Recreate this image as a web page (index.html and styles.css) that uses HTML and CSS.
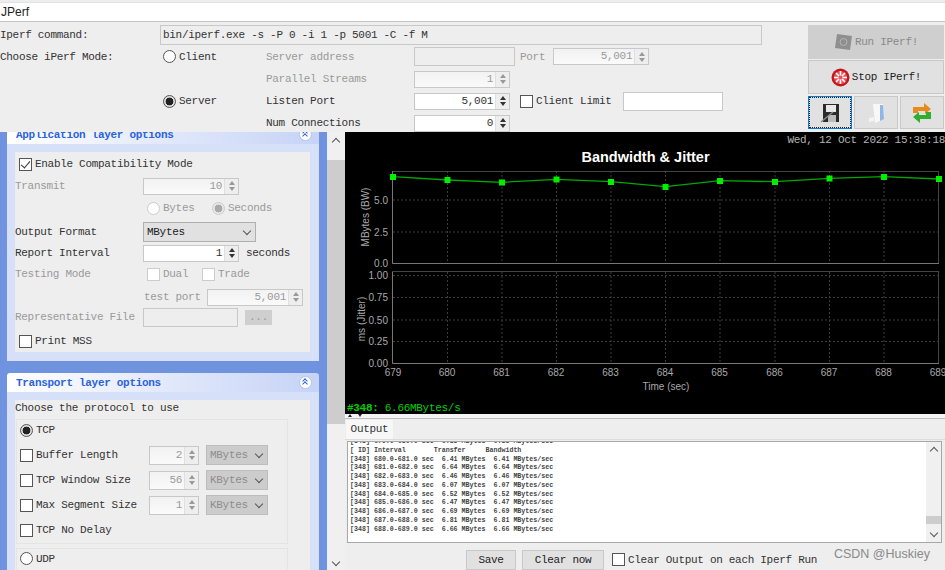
FILE: index.html
```html
<!DOCTYPE html>
<html>

<head>
    <title>JPerf</title>
    <meta charset="utf-8">
    <link rel="stylesheet" href="styles.css">
</head>

<body>
    <div class="app">
        <div class="titlebar">JPerf</div>

        <div class="top">
            <div class="top-form">
                <div class="lbl">Iperf command:</div>
                <div class="command">bin/iperf.exe -s -P 0 -i 1 -p 5001 -C -f M</div>

                <div class="lbl">Choose iPerf Mode:</div>
                <div class="opt"><span class="radio"></span>Client</div>
                <div class="lbl off">Server address</div>
                <div class="field off w-addr"></div>
                <div class="port-cell">
                    <span class="lbl off">Port</span>
                    <div class="spin off w-port"><span class="val">5,001</span><span class="arrows"><i></i><i></i></span></div>
                </div>

                <div></div>
                <div></div>
                <div class="lbl off">Parallel Streams</div>
                <div class="spin off w-top"><span class="val">1</span><span class="arrows"><i></i><i></i></span></div>
                <div></div>

                <div></div>
                <div class="opt"><span class="radio on"></span>Server</div>
                <div class="lbl">Listen Port</div>
                <div class="spin w-top"><span class="val">5,001</span><span class="arrows"><i></i><i></i></span></div>
                <div class="limit-cell">
                    <div class="opt"><span class="check"></span>Client Limit</div>
                    <div class="field w-limit"></div>
                </div>

                <div></div>
                <div></div>
                <div class="lbl">Num Connections</div>
                <div class="spin w-top"><span class="val">0</span><span class="arrows"><i></i><i></i></span></div>
                <div></div>
            </div>

            <div class="actions">
                <div class="btn big disabled">
                    <svg width="19" height="18" viewBox="0 0 19 18"><path d="M3 1 L18 3 L16 17 L1 15 Z" fill="#8f8f8f"/><circle cx="9.5" cy="9" r="3.5" fill="none" stroke="#b5b5b5"/></svg>
                    Run IPerf!
                </div>
                <div class="btn big">
                    <svg width="19" height="19" viewBox="0 0 19 19"><circle cx="9.5" cy="9.5" r="9" fill="#c4161c"/><circle cx="9.5" cy="9.5" r="6.6" fill="#e8525a"/><path d="M9.5 3 V7.5 M9.5 11.5 V16 M3 9.5 H7.5 M11.5 9.5 H16 M5 5 L8 8 M11 11 L14 14 M14 5 L11 8 M8 11 L5 14" stroke="#fff" stroke-width="1.6"/></svg>
                    Stop IPerf!
                </div>
                <div class="tool-row">
                    <div class="btn tool focus">
                        <svg width="20" height="20" viewBox="0 0 20 20"><path d="M3 1 H19 V19 H3 Z" fill="#2b2b2b"/><rect x="6" y="2" width="10" height="7" fill="#e8e8e8"/><rect x="8" y="12" width="8" height="7" fill="#bbb"/><path d="M1 19 L13 9" stroke="#8a8a8a" stroke-width="1.5"/></svg>
                    </div>
                    <div class="btn tool">
                        <svg width="20" height="22" viewBox="0 0 20 22"><path d="M3 16 L8 15 V19 L3 20 Z" fill="#f4f4f4"/><path d="M7 2 H17 L18 17 L9 21 Z" fill="#f8f8f8"/><path d="M14 3 H17 L18 17 L14 19 Z" fill="#8fb6e6"/></svg>
                    </div>
                    <div class="btn tool">
                        <svg width="20" height="20" viewBox="0 0 20 20"><path d="M1 10 V4 H12 V0 L19 6 L13 11 V8 H6 V10 Z" fill="#e98a1c"/><path d="M19 9 V16 H8 V20 L1 14 L7 9 V12 H14 V9 Z" fill="#2fae2f"/></svg>
                    </div>
                </div>
            </div>
        </div>

        <div class="main">
            <div class="side">
                <div class="panes">
                    <div class="pane first">
                        <div class="pane-head">Application layer options<span class="collapse"></span></div>
                        <div class="pane-body">
                            <div class="pane-inner app-rows">
                                <div class="row"><div class="opt wide"><span class="check ticked"></span>Enable Compatibility Mode</div></div>
                                <div class="row">
                                    <span class="lbl off">Transmit</span>
                                    <div class="spin off w-side"><span class="val">10</span><span class="arrows"><i></i><i></i></span></div>
                                </div>
                                <div class="row">
                                    <span></span>
                                    <div class="ctrls">
                                        <div class="opt off opt-bytes"><span class="radio"></span>Bytes</div>
                                        <div class="opt off"><span class="radio on"></span>Seconds</div>
                                    </div>
                                </div>
                                <div class="row">
                                    <span class="lbl">Output Format</span>
                                    <div class="select w-format">MBytes<span class="chev"></span></div>
                                </div>
                                <div class="row">
                                    <span class="lbl">Report Interval</span>
                                    <div class="ctrls">
                                        <div class="spin w-side"><span class="val">1</span><span class="arrows"><i></i><i></i></span></div>
                                        <span class="lbl unit">seconds</span>
                                    </div>
                                </div>
                                <div class="row">
                                    <span class="lbl off">Testing Mode</span>
                                    <div class="ctrls">
                                        <div class="opt off opt-dual"><span class="check"></span>Dual</div>
                                        <div class="opt off"><span class="check"></span>Trade</div>
                                    </div>
                                </div>
                                <div class="row">
                                    <span></span>
                                    <div class="ctrls">
                                        <span class="lbl off test-port">test port</span>
                                        <div class="spin off w-side"><span class="val">5,001</span><span class="arrows"><i></i><i></i></span></div>
                                    </div>
                                </div>
                                <div class="row">
                                    <span class="lbl off">Representative File</span>
                                    <div class="ctrls">
                                        <div class="field off w-file"></div>
                                        <div class="dots">...</div>
                                    </div>
                                </div>
                                <div class="row"><div class="opt wide"><span class="check"></span>Print MSS</div></div>
                            </div>
                        </div>
                    </div>

                    <div class="pane">
                        <div class="pane-head">Transport layer options<span class="collapse"></span></div>
                        <div class="pane-body">
                            <div class="pane-inner">
                                <div class="proto-title lbl">Choose the protocol to use</div>
                                <div class="group">
                                    <div class="proto-row"><div class="opt"><span class="radio on"></span>TCP</div></div>
                                    <div class="proto-row">
                                        <div class="opt name"><span class="check"></span>Buffer Length</div>
                                        <div class="spin off w-proto"><span class="val">2</span><span class="arrows"><i></i><i></i></span></div>
                                        <div class="select off w-unit">MBytes<span class="chev"></span></div>
                                    </div>
                                    <div class="proto-row">
                                        <div class="opt name"><span class="check"></span>TCP Window Size</div>
                                        <div class="spin off w-proto"><span class="val">56</span><span class="arrows"><i></i><i></i></span></div>
                                        <div class="select off w-unit">KBytes<span class="chev"></span></div>
                                    </div>
                                    <div class="proto-row">
                                        <div class="opt name"><span class="check"></span>Max Segment Size</div>
                                        <div class="spin off w-proto"><span class="val">1</span><span class="arrows"><i></i><i></i></span></div>
                                        <div class="select off w-unit">KBytes<span class="chev"></span></div>
                                    </div>
                                    <div class="proto-row"><div class="opt"><span class="check"></span>TCP No Delay</div></div>
                                </div>
                                <div class="group">
                                    <div class="proto-row"><div class="opt"><span class="radio"></span>UDP</div></div>
                                </div>
                            </div>
                        </div>
                    </div>
                </div>
                <div class="side-scroll">
                    <span class="chev up"></span>
                    <div class="thumb"></div>
                    <span class="chev"></span>
                </div>
            </div>

            <div class="right">
                <div class="chart">
                    <svg class="plot" width="600" height="282" viewBox="345 132 600 282">
                        <g stroke="#3c3c3c" stroke-dasharray="2 2">
                            <path d="M393 200 H939 M393 232 H939 M393 275.5 H939 M393 297.5 H939 M393 320 H939 M393 341.5 H939" />
                            <path d="M447.5 171 V263 M502 171 V263 M556.5 171 V263 M611 171 V263 M665.5 171 V263 M720 171 V263 M775 171 V263 M829.5 171 V263 M884 171 V263" />
                            <path d="M447.5 272 V363 M502 272 V363 M556.5 272 V363 M611 272 V363 M665.5 272 V363 M720 272 V363 M775 272 V363 M829.5 272 V363 M884 272 V363" />
                        </g>
                        <rect x="392.5" y="171.5" width="546" height="92" fill="none" stroke="#444"/>
                        <rect x="392.5" y="271.5" width="546" height="92" fill="none" stroke="#444"/>
                        <path d="M392.5 171 V263.5 H939 M392.5 272 V363.5 H939" fill="none" stroke="#777"/>

                        <polyline fill="none" stroke="#00a800" stroke-width="1.3" points="393,176.7 447.5,180 502,182.3 556.5,179.3 611,181.7 665.5,186.7 720,180.7 775,181.7 829.5,178.3 884,176.7 938.5,179"/>
                        <g fill="#00f000">
                            <rect x="390" y="174" width="6" height="6"/>
                            <rect x="444.5" y="177" width="6" height="6"/>
                            <rect x="499" y="179.5" width="6" height="6"/>
                            <rect x="553.5" y="176.5" width="6" height="6"/>
                            <rect x="608" y="179" width="6" height="6"/>
                            <rect x="662.5" y="184" width="6" height="6"/>
                            <rect x="717" y="178" width="6" height="6"/>
                            <rect x="772" y="179" width="6" height="6"/>
                            <rect x="826.5" y="175.5" width="6" height="6"/>
                            <rect x="881" y="174" width="6" height="6"/>
                            <rect x="936" y="176" width="6" height="6"/>
                        </g>

                        <text class="chart-title" x="645.5" y="162" text-anchor="middle">Bandwidth &amp; Jitter</text>
                        <g class="tick" text-anchor="end">
                            <text x="388" y="204">5.0</text>
                            <text x="388" y="236">2.5</text>
                            <text x="388" y="267">0.0</text>
                            <text x="388" y="279">1.00</text>
                            <text x="388" y="301">0.75</text>
                            <text x="388" y="324">0.50</text>
                            <text x="388" y="345">0.25</text>
                            <text x="388" y="367">0.00</text>
                        </g>
                        <g class="tick" text-anchor="middle">
                            <text x="393" y="376">679</text>
                            <text x="447" y="376">680</text>
                            <text x="501.5" y="376">681</text>
                            <text x="556" y="376">682</text>
                            <text x="610.5" y="376">683</text>
                            <text x="665" y="376">684</text>
                            <text x="719.5" y="376">685</text>
                            <text x="774.5" y="376">686</text>
                            <text x="829" y="376">687</text>
                            <text x="883.5" y="376">688</text>
                            <text x="938" y="376">689</text>
                            <text x="666" y="390">Time (sec)</text>
                            <text x="0" y="0" transform="translate(369 217) rotate(-90)">MBytes (BW)</text>
                            <text x="0" y="0" transform="translate(365 319) rotate(-90)">ms (Jitter)</text>
                        </g>
                    </svg>
                    <div class="stamp">Wed, 12 Oct 2022 15:38:18</div>
                    <div class="rate"><b>#348:</b> 6.66MBytes/s</div>
                </div>

                <div class="splitter"><i class="up"></i><i></i></div>

                <div class="output">
                    <div class="tabs"><div class="tab">Output</div></div>
                    <div class="log-wrap">
                        <div class="log">
<pre>[348] 679.0-680.0 sec  6.85 MBytes  6.85 MBytes/sec
[ ID] Interval       Transfer     Bandwidth
[348] 680.0-681.0 sec  6.41 MBytes  6.41 MBytes/sec
[348] 681.0-682.0 sec  6.64 MBytes  6.64 MBytes/sec
[348] 682.0-683.0 sec  6.46 MBytes  6.46 MBytes/sec
[348] 683.0-684.0 sec  6.07 MBytes  6.07 MBytes/sec
[348] 684.0-685.0 sec  6.52 MBytes  6.52 MBytes/sec
[348] 685.0-686.0 sec  6.47 MBytes  6.47 MBytes/sec
[348] 686.0-687.0 sec  6.69 MBytes  6.69 MBytes/sec
[348] 687.0-688.0 sec  6.81 MBytes  6.81 MBytes/sec
[348] 688.0-689.0 sec  6.66 MBytes  6.66 MBytes/sec</pre>
                        </div>
                        <div class="log-scroll">
                            <span class="chev up"></span>
                            <div class="log-thumb"></div>
                            <span class="chev"></span>
                        </div>
                    </div>
                    <div class="output-foot">
                        <div class="btn foot-save">Save</div>
                        <div class="btn foot-clear">Clear now</div>
                        <div class="opt"><span class="check"></span>Clear Output on each Iperf Run</div>
                        <div class="mark">CSDN @Huskiey</div>
                    </div>
                </div>
            </div>
        </div>
    </div>
</body>

</html>
```

FILE: styles.css
```css
html, body {
    margin: 0;
    padding: 0;
}

body {
    width: 945px;
    height: 570px;
    overflow: hidden;
    background: #eeeeee;
    font-family: "Liberation Mono", "Noto Sans CJK SC", monospace;
    font-size: 11px;
    letter-spacing: -0.3px;
    color: #333;
}

.app {
    display: flex;
    flex-direction: column;
    height: 570px;
}

.titlebar {
    height: 18px;
    margin-top: 2px;
    border-top: 1px solid #e2e2e2;
    border-bottom: 1px solid #c4c4c4;
    background: white;
    padding-left: 1px;
    font-family: "Liberation Sans", sans-serif;
    font-size: 12px;
    letter-spacing: 0;
    line-height: 18px;
    color: #222;
}

/* top form */
.top {
    display: flex;
    height: 110px;
    flex-shrink: 0;
}

.top-form {
    width: 808px;
    display: grid;
    grid-template-columns: 160px 106px 148px 106px 242px;
    grid-template-rows: 21px 23px 22px 22px 22px;
    align-items: center;
    padding-top: 2px;
}

.lbl {
    white-space: pre;
}

.off {
    color: #9a9a9a;
}

.command {
    grid-column: 2 / 6;
    height: 18px;
    line-height: 18px;
    padding-left: 2px;
    border: 1px solid #c8c8c8;
    color: #333;
}

.opt {
    display: flex;
    align-items: center;
    gap: 3px;
    white-space: pre;
}

.opt.off {
    color: #9a9a9a;
}

.opt .radio, .opt .check {
    margin-left: 3px;
}

.radio {
    display: inline-block;
    box-sizing: border-box;
    width: 13px;
    height: 13px;
    border: 1px solid #555;
    border-radius: 50%;
    background: white;
}

.radio.on {
    background: radial-gradient(circle, #222 0 3.6px, #ddd 4.2px);
}

.off .radio {
    border-color: #ccc;
}

.off .radio.on {
    background: radial-gradient(circle, #aaa 0 3.6px, #e8e8e8 4.2px);
}

.check {
    display: inline-block;
    box-sizing: border-box;
    width: 13px;
    height: 13px;
    border: 1px solid #555;
    background: white;
    position: relative;
}

.off .check {
    border-color: #ccc;
}

.check.ticked::after {
    content: "";
    position: absolute;
    left: 3px;
    top: 0;
    width: 4px;
    height: 8px;
    border-right: 1px solid #333;
    border-bottom: 1px solid #333;
    transform: rotate(40deg);
}

.field {
    box-sizing: border-box;
    height: 19px;
    border: 1px solid #c8c8c8;
    background: white;
}

.field.off {
    background: #eeeeee;
}

.w-addr { width: 101px; }
.w-limit { width: 100px; }
.w-file { width: 95px; }

.spin {
    box-sizing: border-box;
    display: flex;
    height: 17px;
    border: 1px solid #c8c8c8;
    background: white;
    color: #333;
}

.spin .val {
    flex: 1;
    text-align: right;
    line-height: 15px;
    padding-right: 2px;
}

.spin .arrows {
    width: 13px;
    display: flex;
    flex-direction: column;
    justify-content: center;
    align-items: center;
    gap: 2px;
    background: #eeeeee;
    border-left: 1px solid #e0e0e0;
}

.spin .arrows i {
    width: 0;
    height: 0;
    border-left: 3.5px solid transparent;
    border-right: 3.5px solid transparent;
    border-bottom: 4px solid #333;
}

.spin .arrows i + i {
    border-bottom: 0;
    border-top: 4px solid #333;
}

.spin.off {
    background: linear-gradient(#f2f2f2, #fafafa);
    color: #9a9a9a;
}

.spin.off .arrows i {
    border-bottom-color: #999;
}

.spin.off .arrows i + i {
    border-top-color: #999;
}

.w-top { width: 96px; }
.w-port { width: 96px; }
.w-side { width: 96px; }
.w-proto { width: 50px; height: 19px; }
.w-proto .val { line-height: 17px; }

.port-cell {
    display: flex;
    align-items: center;
    gap: 8px;
}

.limit-cell {
    display: flex;
    align-items: center;
    gap: 11px;
}

.limit-cell .opt .check {
    margin-left: 0;
}

/* run / stop buttons */
.actions {
    width: 136px;
    padding-top: 3px;
    display: flex;
    flex-direction: column;
    gap: 1px;
}

.btn {
    box-sizing: border-box;
    display: flex;
    align-items: center;
    justify-content: center;
    gap: 2px;
    background: #e1e1e1;
    border: 1px solid #c8c8c8;
    color: #222;
}

.big {
    height: 34px;
}

.disabled {
    background: #cfcfcf;
    border-color: #cfcfcf;
    color: #8a8a8a;
}

.tool-row {
    display: flex;
    gap: 2px;
    margin-top: 1px;
}

.tool {
    width: 44px;
    height: 33px;
}

.focus {
    border: 1px solid #0a78d7;
    outline: 1px dotted #222;
    outline-offset: -2px;
}

/* left side */
.main {
    display: flex;
    flex: 1;
    min-height: 0;
    position: relative;
}

.side {
    width: 345px;
    flex-shrink: 0;
    display: flex;
    overflow: hidden;
    background: #6f93df;
}

.panes {
    width: 312px;
    margin: -7px 8px 0 7px;
    flex-shrink: 0;
    display: flex;
    flex-direction: column;
    gap: 12px;
}

.pane-head {
    height: 19px;
    display: flex;
    align-items: center;
    justify-content: space-between;
    padding: 0 7px 0 9px;
    background: linear-gradient(90deg, #ffffff, #c6d3f7);
    color: #2c62da;
    font-weight: bold;
    border-radius: 3px 3px 0 0;
}

.collapse {
    box-sizing: border-box;
    width: 13px;
    height: 13px;
    border-radius: 50%;
    background: white;
    border: 1px solid #b5c4ea;
    position: relative;
}

.collapse::before, .collapse::after {
    content: "";
    position: absolute;
    left: 3px;
    width: 3px;
    height: 3px;
    border-left: 1px solid #2c62da;
    border-top: 1px solid #2c62da;
    transform: rotate(45deg);
}

.collapse::before { top: 2px; }
.collapse::after { top: 5px; }

.pane-body {
    background: #d6e0f8;
    padding: 8px 9px 9px 8px;
}

.pane-inner {
    background: #eeeeee;
}

.first {
    flex-shrink: 0;
}

.app-rows {
    display: grid;
    grid-template-rows: 22px 22px 24px 21px 21px 23px 20px 24px 21px;
    padding-top: 2px;
}

.row {
    display: grid;
    grid-template-columns: 128px 1fr;
    height: 20px;
    align-items: center;
}

.wide {
    grid-column: 1 / 3;
}

.opt.wide .check {
    margin-left: 4px;
}

.ctrls {
    display: flex;
    align-items: center;
}

.opt-bytes { width: 65px; margin-left: 1px; }
.opt-dual { width: 55px; margin-left: 1px; }
.unit { margin-left: 7px; }
.test-port { margin-left: 1px; width: 63px; }
.dots {
    width: 27px;
    height: 15px;
    margin-left: 7px;
    background: #cfcfcf;
    color: #999;
    text-align: center;
    line-height: 15px;
}

.select {
    box-sizing: border-box;
    display: flex;
    align-items: center;
    justify-content: space-between;
    height: 20px;
    padding: 0 5px 0 3px;
    background: #e1e1e1;
    border: 1px solid #b0b0b0;
    color: #222;
}

.select.off {
    background: #cccccc;
    border-color: #bdbdbd;
    color: #8d8d8d;
}

.w-format { width: 113px; }
.w-unit { width: 62px; }

.chev {
    width: 5px;
    height: 5px;
    border-right: 1px solid #555;
    border-bottom: 1px solid #555;
    transform: rotate(45deg);
    margin-top: -3px;
}

.chev.up {
    transform: rotate(225deg);
    margin-top: 3px;
}

.proto-title {
    height: 19px;
    line-height: 17px;
}

.group {
    width: 272px;
    box-sizing: border-box;
    margin-left: 1px;
    border: 1px solid #e4e4e4;
    margin-bottom: 4px;
}

.proto-row {
    display: flex;
    align-items: center;
    height: 25px;
}

.proto-row:first-child {
    height: 20px;
    margin-bottom: 2.5px;
}

.name {
    width: 132px;
}

.proto-row .select {
    margin-left: 7px;
}

.side-scroll {
    width: 18px;
    flex-shrink: 0;
    background: #f0f0f0;
    display: flex;
    flex-direction: column;
    align-items: center;
    height: 438px;
}

.side-scroll .chev.up { margin-top: 7px; }

.thumb {
    width: 100%;
    height: 264px;
    margin-top: 15px;
    background: #cdcdcd;
    flex-shrink: 0;
}

.side-scroll .chev {
    margin-top: auto;
    margin-bottom: 5px;
}

.side-scroll .chev.up {
    margin-bottom: 0;
}

/* chart and output */
.right {
    flex: 1;
    min-width: 0;
    display: flex;
    flex-direction: column;
}

.chart {
    position: relative;
    height: 282px;
    background: black;
    flex-shrink: 0;
}

.plot {
    display: block;
}

.chart-title {
    font-family: "Liberation Sans", sans-serif;
    font-size: 14.5px;
    font-weight: bold;
    letter-spacing: 0;
    fill: white;
}

.tick {
    font-family: "Liberation Sans", sans-serif;
    font-size: 10px;
    letter-spacing: 0;
    fill: #a8a8a8;
}

.stamp {
    position: absolute;
    top: 2px;
    right: 0;
    color: #b4b4b4;
}

.rate {
    position: absolute;
    left: 2px;
    bottom: 0;
    color: #00d000;
}

.splitter {
    height: 4px;
    flex-shrink: 0;
    display: flex;
    gap: 6px;
    padding-left: 3px;
    border-bottom: 1px solid #bdbdbd;
    background: #f4f4f4;
}

.splitter i {
    width: 0;
    height: 0;
    border-left: 2.5px solid transparent;
    border-right: 2.5px solid transparent;
    border-top: 3px solid #222;
}

.splitter i.up {
    border-top: 0;
    border-bottom: 3px solid #222;
}

.output {
    flex: 1;
    display: flex;
    flex-direction: column;
}

.tabs {
    height: 19px;
    padding: 1px 0 0 1px;
    border-bottom: 1px solid #dcdcdc;
    flex-shrink: 0;
}

.tab {
    width: 47px;
    height: 19px;
    line-height: 19px;
    text-align: center;
    background: #f7f7f7;
}

.log-wrap {
    box-sizing: border-box;
    height: 102px;
    margin: 1px 3px 0 2px;
    display: flex;
    border: 1px solid #a8a8a8;
    background: white;
    flex-shrink: 0;
}

.log {
    flex: 1;
    overflow: hidden;
}

.log pre {
    margin: -5px 0 0 2px;
    font-family: "Liberation Mono", monospace;
    font-size: 6.65px;
    font-weight: bold;
    letter-spacing: 0;
    line-height: 8.75px;
    color: #444;
}

.log-scroll {
    width: 15px;
    flex-shrink: 0;
    background: #f0f0f0;
    display: flex;
    flex-direction: column;
    align-items: center;
}

.log-scroll .chev.up { margin-top: 6px; }

.log-thumb {
    width: 100%;
    height: 8px;
    margin-top: auto;
    background: #cdcdcd;
}

.log-scroll .chev {
    margin: 6px 0 6px;
}

.log-scroll .chev.up {
    margin-bottom: 0;
}

.output-foot {
    flex: 1;
    display: flex;
    align-items: center;
    padding: 6px 0 0 121px;
    position: relative;
}

.foot-save {
    width: 50px;
    height: 20px;
}

.foot-clear {
    width: 82px;
    height: 20px;
    margin: 0 5px 0 6px;
}

.mark {
    position: absolute;
    right: 15px;
    top: 4px;
    font-family: "Liberation Sans", sans-serif;
    font-size: 12.5px;
    letter-spacing: 0;
    color: #8a8a8a;
}
```
